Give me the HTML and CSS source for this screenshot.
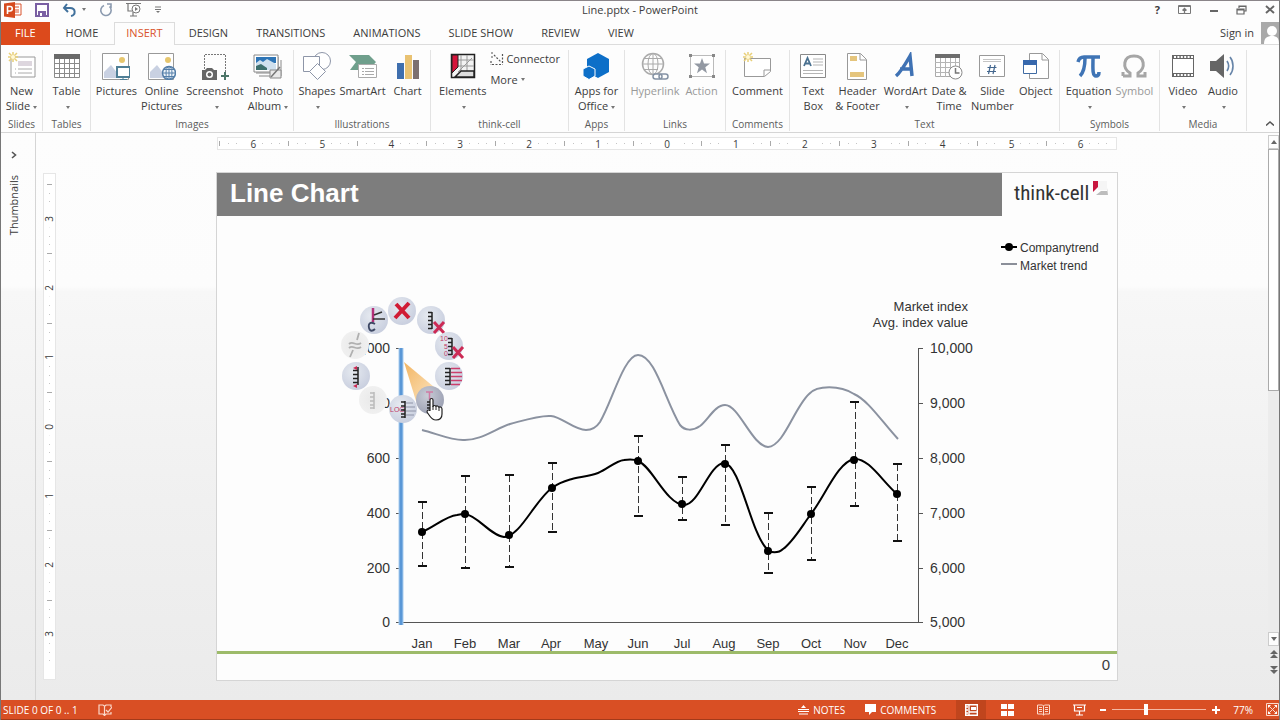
FILE: index.html
```html
<!DOCTYPE html>
<html lang="en">
<head>
  <meta charset="UTF-8">
  <title>Line.pptx - PowerPoint</title>
  <link rel="stylesheet" href="styles.css">
</head>
<body>

  <!-- Title bar -->
  <header class="title-bar">
    <div class="quick-access">
      <svg class="icon" width="18" height="16" viewBox="0 0 18 16"><path d="M10 2h7v11h-7z" fill="#fff" stroke="#d9532c"/><path d="M11 5h4M11 8h4M11 10h4" stroke="#d9532c"/><path d="M0 1.500L11 0v16L0 14.500z" fill="#d64a1e"/><path d="M3.500 12V4.500h2.500a2 2 0 0 1 0 4.500H3.500" fill="none" stroke="#fff" stroke-width="1.600"/></svg>
      <button class="tool" aria-label="Save"><svg width="14" height="14" viewBox="0 0 14 14"><path d="M1 1h12v12H1z" fill="#fff" stroke="#7a5fa3" stroke-width="2"/><path d="M3 8h8v5H3z" fill="#7a5fa3"/><path d="M5 10h2v3H5z" fill="#fff"/></svg></button>
      <button class="tool undo" aria-label="Undo"><svg width="14" height="14" viewBox="0 0 14 14"><path d="M5 1L2 5l4 4M2 5h6c6 0 6 7 1 8" fill="none" stroke="#41719c" stroke-width="2"/></svg><i class="caret"></i></button>
      <button class="tool" aria-label="Repeat"><svg width="14" height="14" viewBox="0 0 14 14"><path d="M5 2.500A5.200 5.200 0 1 0 10.500 3.500M8 1h4v4" fill="none" stroke="#8c9bb0" stroke-width="1.600"/></svg></button>
      <button class="tool" aria-label="Start from beginning"><svg width="16" height="16" viewBox="0 0 16 16"><path d="M0 1.500h15M2 2v7h4M4 14h7M7 10v4" fill="none" stroke="#777" stroke-width="1.200"/><circle cx="10" cy="7" r="4" fill="#fff" stroke="#777"/><path d="M9 5l3 2-3 2z" fill="#777"/></svg></button>
      <button class="tool" aria-label="Customize toolbar"><svg width="6" height="8" viewBox="0 0 6 8"><path d="M0 1h6M0 3.500h6" stroke="#777"/><path d="M1 5h4L3 7z" fill="#777"/></svg></button>
    </div>
    <h1 class="doc-title">Line.pptx - PowerPoint</h1>
    <div class="window-buttons">
      <button class="tool" aria-label="Help"><b>?</b></button>
      <button class="tool" aria-label="Ribbon display options"><svg width="13" height="11" viewBox="0 0 13 11"><path d="M.5 1.500h12v8H.500zM0 2.500h13" fill="none" stroke="#777"/><path d="M6.500 9V5M4.500 6.500l2-2 2 2" fill="none" stroke="#777" stroke-width="1.300"/></svg></button>
      <button class="tool" aria-label="Minimize"><svg width="9" height="9" viewBox="0 0 9 9"><path d="M1 6h8" stroke="#666" stroke-width="2"/></svg></button>
      <button class="tool" aria-label="Restore"><svg width="11" height="10" viewBox="0 0 11 10"><path d="M3 3V1h7v5H8M1 4h7v5H1zM1 5h7M3 1.500h7" fill="none" stroke="#666" stroke-width="1.200"/></svg></button>
      <button class="tool" aria-label="Close"><svg width="10" height="9" viewBox="0 0 10 9"><path d="M1 1l8 7M9 1L1 8" stroke="#666" stroke-width="2"/></svg></button>
    </div>
  </header>

  <!-- Ribbon tabs -->
  <nav class="tabs">
    <a class="tab file" href="#file">FILE</a>
    <a class="tab" href="#home">HOME</a>
    <a class="tab active" href="#insert">INSERT</a>
    <a class="tab" href="#design">DESIGN</a>
    <a class="tab" href="#transitions">TRANSITIONS</a>
    <a class="tab" href="#animations">ANIMATIONS</a>
    <a class="tab" href="#slideshow">SLIDE SHOW</a>
    <a class="tab" href="#review">REVIEW</a>
    <a class="tab" href="#view">VIEW</a>
    <a class="sign-in" href="#signin">Sign in
      <svg width="18" height="22" viewBox="0 0 18 22"><path d="M0 0h18v22H0z" fill="#a9a9a9"/><circle cx="11" cy="9" r="5" fill="#fff"/><path d="M3 22c0-6 3-8 8-8s7 2 7 8z" fill="#fff"/></svg>
    </a>
  </nav>

  <!-- Ribbon -->
  <section class="ribbon">
    <div class="group">
      <div class="commands">
        <button class="command"><svg width="28" height="28" viewBox="0 0 28 28"><path d="M3 5h24v20H3z" fill="#fff" stroke="#999"/><path d="M10 9h14v5H10z" fill="#ddd6de"/><path d="M7 17h1M10 17h14M7 21h1M10 21h14" stroke="#aaa"/><path d="M5 0v10M0 5h10M1 1l8 8M9 1L1 9" stroke="#e8cf78" stroke-width="1.500"/><circle cx="5" cy="5" r="2" fill="#fff8d8"/></svg><span>New<br>Slide<i class="caret"></i></span></button>
      </div>
      <h2>Slides</h2>
    </div>
    <div class="group">
      <div class="commands">
        <button class="command"><svg width="28" height="28" viewBox="0 0 28 28"><path d="M1 3h26v23H1z" fill="#fff"/><path d="M1 2h26v5H1z" fill="#696969"/><path d="M1.500 7v18.500h25V7M1 11.500h26M1 16.500h26M1 21.500h26M6.500 7v19M11.500 7v19M16.500 7v19M21.500 7v19" fill="none" stroke="#8a8a8a"/></svg><span>Table<br><i class="caret"></i></span></button>
      </div>
      <h2>Tables</h2>
    </div>
    <div class="group">
      <div class="commands">
        <button class="command"><svg width="28" height="28" viewBox="0 0 28 28"><path d="M.5 1.500h26v26H.500z" fill="#fff" stroke="#999"/><path d="M2 26V20l7-7 10 13z" fill="#c9d1e2"/><circle cx="20" cy="8" r="3" fill="#e6c66e"/><path d="M15 15h13v10H15z" fill="#fff" stroke="#4f7f96" stroke-width="2"/><path d="M21 25v3M18 27.500h7" stroke="#4f7f96"/></svg><span>Pictures</span></button>
        <button class="command"><svg width="28" height="28" viewBox="0 0 28 28"><path d="M.5 1.500h25v26H.500z" fill="#fff" stroke="#999"/><path d="M2 26V20l7-7 10 13z" fill="#c9d1e2"/><circle cx="20" cy="8" r="3" fill="#e6c66e"/><circle cx="21" cy="21" r="6.500" fill="#eef4fa" stroke="#557fa9" stroke-width="1.500"/><path d="M14.500 21h13M16 17.500h10M16 24.500h10M21 14.500v13" stroke="#557fa9"/><ellipse cx="21" cy="21" rx="3" ry="6.500" fill="none" stroke="#557fa9"/></svg><span>Online<br>Pictures</span></button>
        <button class="command"><svg width="28" height="28" viewBox="0 0 28 28"><path d="M3.500 17V2.500h21V20" fill="none" stroke="#777" stroke-dasharray="2 1"/><path d="M1 18h3l2-2h5l2 2h3v10H1z" fill="#666"/><circle cx="8.500" cy="22.500" r="3.500" fill="#fff"/><circle cx="8.500" cy="22.500" r="2" fill="#666"/><path d="M24 20v8M20 24h8" stroke="#4d7568" stroke-width="2"/></svg><span>Screenshot<br><i class="caret"></i></span></button>
        <button class="command"><svg width="30" height="28" viewBox="0 0 30 28"><path d="M6 24h22V8" fill="none" stroke="#888"/><path d="M3 21h22V5" fill="none" stroke="#888"/><path d="M1 3h24v17H1z" fill="#fff" stroke="#888"/><path d="M3 5h20v6H3z" fill="#2e75b6"/><path d="M3 11l4-3 3 2 4-3 9 5v6H3z" fill="#cfe0ee"/><path d="M3 14l5-2 6 4v2H3z" fill="#3d6f6d"/><path d="M17 18h11v8H17z" fill="#e9e9e9" stroke="#888"/><path d="M18 25l9-10" stroke="#777" stroke-width="1.500"/></svg><span>Photo<br>Album<i class="caret"></i></span></button>
      </div>
      <h2>Images</h2>
    </div>
    <div class="group">
      <div class="commands">
        <button class="command"><svg width="28" height="28" viewBox="0 0 28 28"><circle cx="19" cy="9" r="8.500" fill="#fff" stroke="#8e96a8"/><path d="M.5 4.500h16v15H.500z" fill="#fff" stroke="#8e96a8"/><path d="M14.500 11.500l8 8-8 8-8-8z" fill="#fff" stroke="#8e96a8"/></svg><span>Shapes<br><i class="caret"></i></span></button>
        <button class="command"><svg width="28" height="28" viewBox="0 0 28 28"><path d="M0 3h20l7 7-7 8H1l6-8z" fill="#6f9f8c"/><path d="M9.500 12.500h18v13h-18z" fill="#fff" stroke="#aaa"/><path d="M13 16.500h2M16 16.500h9M13 19.500h2M16 19.500h9M13 22.500h2M16 22.500h9" stroke="#aaa"/></svg><span>SmartArt</span></button>
        <button class="command"><svg width="24" height="28" viewBox="0 0 24 28"><path d="M1 11h7v16H1z" fill="#3f6fae"/><path d="M9 3h7v24H9z" fill="#e9c272"/><path d="M17 8h6v19h-6z" fill="#7d7070"/></svg><span>Chart</span></button>
      </div>
      <h2>Illustrations</h2>
    </div>
    <div class="group">
      <div class="commands">
        <button class="command"><svg width="26" height="28" viewBox="0 0 26 28"><path d="M1.500 2.500h23v23h-23z" fill="#f3f3f3" stroke="#222" stroke-width="1.500"/><path d="M6 8h18M6 14h18M11 3v16M17 3v16M8 20L22 6" stroke="#999"/><path d="M2 3h6v12l-6 6z" fill="#d5143b" stroke="#222"/><path d="M5 25l6-6h13v6z" fill="#ddd" stroke="#222" stroke-width="1.500"/></svg><span>Elements<br><i class="caret"></i></span></button>
        <div class="small-commands">
          <button class="small"><svg width="14" height="14" viewBox="0 0 14 14"><path d="M1 1h2M1 5h2M4 3l7 7M12.500 2v9M2 12.500h11M1 9v4" stroke="#555" stroke-width="1.200" stroke-dasharray="2 1.500" fill="none"/></svg>Connector</button>
          <button class="small">More<i class="caret"></i></button>
        </div>
      </div>
      <h2>think-cell</h2>
    </div>
    <div class="group">
      <div class="commands">
        <button class="command"><svg width="28" height="28" viewBox="0 0 28 28"><path d="M15 1l11 6v13l-11 6-11-6V7z" fill="#0d6fc8"/><path d="M6 14l6 3v7l-6 3.500L0 24v-7z" fill="#0d6fc8" stroke="#fff"/></svg><span>Apps for<br>Office<i class="caret"></i></span></button>
      </div>
      <h2>Apps</h2>
    </div>
    <div class="group">
      <div class="commands">
        <button class="command" disabled><svg width="28" height="28" viewBox="0 0 28 28"><circle cx="12" cy="12" r="10.500" fill="none" stroke="#aaa" stroke-width="1.500"/><ellipse cx="12" cy="12" rx="5" ry="10.500" fill="none" stroke="#aaa"/><path d="M1 12h22M3 6.500h18M3 17.500h14M12 1v22" stroke="#aaa"/><rect x="12" y="22" width="9" height="5" rx="2.500" fill="#fff" stroke="#8593a5" stroke-width="1.500"/><rect x="18" y="22" width="9" height="5" rx="2.500" fill="none" stroke="#8593a5" stroke-width="1.500"/></svg><span>Hyperlink</span></button>
        <button class="command" disabled><svg width="28" height="28" viewBox="0 0 28 28"><path d="M2.500 3.500h23v21h-23z" fill="#fff" stroke="#bbb"/><path d="M1 2h3v3H1zM24 2h3v3h-3zM1 23h3v3H1zM24 23h3v3h-3z" fill="#888"/><path d="M14 6l2 5.500h6l-4.700 3.700 1.700 6-5-3.600-5 3.600 1.700-6L6 11.500h6z" fill="#9399a3"/></svg><span>Action</span></button>
      </div>
      <h2>Links</h2>
    </div>
    <div class="group">
      <div class="commands">
        <button class="command"><svg width="28" height="28" viewBox="0 0 28 28"><path d="M1.500 6.500h26v13l-6 5h-20z" fill="#fff" stroke="#999"/><path d="M27 18h-6v6" fill="none" stroke="#999"/><path d="M5 0v10M0 5h10M1 1l8 8M9 1L1 9" stroke="#e8cf78" stroke-width="1.500"/><circle cx="5" cy="5" r="2" fill="#fff8d8"/></svg><span>Comment</span></button>
      </div>
      <h2>Comments</h2>
    </div>
    <div class="group">
      <div class="commands">
        <button class="command"><svg width="28" height="28" viewBox="0 0 28 28"><path d="M1.500 2.500h25v23h-25z" fill="#fff" stroke="#8a8a8a"/><path d="M14 7h10M14 10h10M14 13h10M4 18.500h20M4 21.500h20" stroke="#b5b5b5"/><path d="M5 14L8.500 6 12 14M6 11.500h5" fill="none" stroke="#4a7190" stroke-width="1.800"/></svg><span>Text<br>Box</span></button>
        <button class="command"><svg width="22" height="28" viewBox="0 0 22 28"><path d="M1.500 1.500h13l6 6v20h-19z" fill="#fff" stroke="#999"/><path d="M14 2v6h6" fill="none" stroke="#999"/><path d="M4 4h7v5H4zM4 20h14v5H4z" fill="#e5c57d"/></svg><span>Header<br>&amp; Footer</span></button>
        <button class="command"><svg width="22" height="28" viewBox="0 0 22 28"><path d="M2 24C7 20 12 11 16 4L18 24M6 17h12" fill="none" stroke="#3f72b4" stroke-width="3.500"/></svg><span>WordArt<br><i class="caret"></i></span></button>
        <button class="command"><svg width="28" height="28" viewBox="0 0 28 28"><path d="M.5 4.500h24v20H.500z" fill="#fff" stroke="#aaa"/><path d="M0 2h25v4H0z" fill="#6d6d6d"/><path d="M0 10.500h25M0 15.500h25M0 20.500h25M5.500 6v19M10.500 6v19M15.500 6v19M20.500 6v19" stroke="#b5b5b5"/><circle cx="20.500" cy="20.500" r="6.500" fill="#fff" stroke="#8a8a8a"/><path d="M20.500 16v5h4" fill="none" stroke="#777" stroke-width="1.500"/></svg><span>Date &amp;<br>Time</span></button>
        <button class="command"><svg width="28" height="28" viewBox="0 0 28 28"><path d="M1.500 3.500h25v21h-25z" fill="#fff" stroke="#999"/><path d="M5 7.500h18M5 9.500h18" stroke="#c5c5c5"/><path d="M12.500 13l-2 9M17 13l-2 9M9.500 15.500h9M9 19.500h9" stroke="#44678e" stroke-width="1.200"/></svg><span>Slide<br>Number</span></button>
        <button class="command"><svg width="28" height="28" viewBox="0 0 28 28"><path d="M7.500 1.500h13l6 6v19h-19z" fill="#fff" stroke="#999"/><path d="M20 2v6h6" fill="none" stroke="#999"/><path d="M1.500 10.500h13v11h-13z" fill="#fff" stroke="#3f6ba3"/><path d="M1 8h14v5H1z" fill="#3768ad"/></svg><span>Object</span></button>
      </div>
      <h2>Text</h2>
    </div>
    <div class="group">
      <div class="commands">
        <button class="command"><svg width="26" height="28" viewBox="0 0 26 28"><path d="M2 10C3 6 5 5 8 5h16M9 6C9 14 8 20 4 24M17 6c0 9-1 18 3 18 2 0 3-1 3-4" fill="none" stroke="#3f74b5" stroke-width="3.500"/></svg><span>Equation<br><i class="caret"></i></span></button>
        <button class="command" disabled><svg width="26" height="28" viewBox="0 0 26 28"><path d="M2 24h7v-3C1 16 2 4 13 4s12 12 4 17v3h7v-4M2 24v-4" fill="none" stroke="#a6a6a6" stroke-width="3"/></svg><span>Symbol</span></button>
      </div>
      <h2>Symbols</h2>
    </div>
    <div class="group">
      <div class="commands">
        <button class="command"><svg width="24" height="28" viewBox="0 0 24 28"><path d="M1 3h22v22H1z" fill="#666"/><path d="M2 7h20v14H2z" fill="#fff"/><path d="M3 5h19M3 23h19" stroke="#fff" stroke-width="2" stroke-dasharray="2 1.400"/></svg><span>Video<br><i class="caret"></i></span></button>
        <button class="command"><svg width="26" height="28" viewBox="0 0 26 28"><path d="M0 9h6l8-7v24l-8-7H0z" fill="#666"/><path d="M17 9c2 3 2 7 0 10M20 5c4 5 4 13 0 18" fill="none" stroke="#6684a8" stroke-width="1.600"/></svg><span>Audio<br><i class="caret"></i></span></button>
      </div>
      <h2>Media</h2>
    </div>
    <button class="collapse" aria-label="Collapse ribbon"><svg width="8" height="5" viewBox="0 0 8 5"><path d="M0 4.500l4-3.500 4 3.500" fill="none" stroke="#555" stroke-width="1.500"/></svg></button>
  </section>

  <main class="workspace">
    <aside class="rail">
      <button class="tool" aria-label="Expand thumbnails"><svg width="6" height="8" viewBox="0 0 6 8"><path d="M1 1l3.500 3L1 7" fill="none" stroke="#555" stroke-width="1.600"/></svg></button>
      <span class="rail-label">Thumbnails</span>
    </aside>

    <div class="stage">
      <div class="ruler horizontal">
        <span><b>6</b></span><span><b>5</b></span><span><b>4</b></span><span><b>3</b></span><span><b>2</b></span><span><b>1</b></span><span><b>0</b></span><span><b>1</b></span><span><b>2</b></span><span><b>3</b></span><span><b>4</b></span><span><b>5</b></span><span><b>6</b></span>
      </div>
      <div class="ruler vertical">
        <span><b>3</b></span><span><b>2</b></span><span><b>1</b></span><span><b>0</b></span><span><b>1</b></span><span><b>2</b></span><span><b>3</b></span>
      </div>

      <article class="slide">
        <div class="slide-head">
          <h2 class="slide-title">Line Chart</h2>
          <div class="brand">think-cell<svg width="15" height="15" viewBox="0 0 15 15"><path d="M0 0h5v6L0 11z" fill="#c8173f"/><path d="M5 0h9v9H5z" fill="#f5f5f5"/><path d="M3 14l5-4h6V7l1 7z" fill="#bdbdbd"/></svg></div>
        </div>

        <svg class="chart" viewBox="217 216 900 435">
          <!-- legend -->
          <g class="legend">
            <path d="M1001 247h16" stroke="#000" stroke-width="2"/>
            <circle cx="1009" cy="247" r="4"/>
            <text x="1020" y="252">Companytrend</text>
            <path d="M1001 264h16" stroke="#8b8f99" stroke-width="2"/>
            <text x="1020" y="270">Market trend</text>
          </g>
          <g class="label end">
            <text x="968" y="311">Market index</text>
            <text x="968" y="327">Avg. index value</text>
          </g>

          <!-- axes -->
          <path class="axis" d="M396 622.500H923M918.500 348V623M918 348.500h5M918 403.500h5M918 458.500h5M918 513.500h5M918 568.500h5M396 348.500h5M396 403.500h5M396 458.500h5M396 513.500h5M396 568.500h5"/>
          <path d="M401 348V625" stroke="#a9cdf0" stroke-width="5"/>
          <path d="M401 348V625" stroke="#5a97d6" stroke-width="3"/>
          <g class="value end">
            <text x="390" y="353">1,000</text>
            <text x="390" y="408">800</text>
            <text x="390" y="463">600</text>
            <text x="390" y="518">400</text>
            <text x="390" y="573">200</text>
            <text x="390" y="627">0</text>
          </g>
          <g class="value">
            <text x="930" y="353">10,000</text>
            <text x="930" y="408">9,000</text>
            <text x="930" y="463">8,000</text>
            <text x="930" y="518">7,000</text>
            <text x="930" y="573">6,000</text>
            <text x="930" y="627">5,000</text>
          </g>
          <g class="label middle">
            <text x="422" y="648">Jan</text>
            <text x="465" y="648">Feb</text>
            <text x="509" y="648">Mar</text>
            <text x="551" y="648">Apr</text>
            <text x="596" y="648">May</text>
            <text x="638" y="648">Jun</text>
            <text x="682" y="648">Jul</text>
            <text x="724" y="648">Aug</text>
            <text x="768" y="648">Sep</text>
            <text x="811" y="648">Oct</text>
            <text x="855" y="648">Nov</text>
            <text x="897" y="648">Dec</text>
          </g>

          <!-- high / low ranges -->
          <path class="range" d="M422.500 502V566M465.500 476V568M509.500 475V567M552.500 463V532M638.500 436V516M682.500 477V520M725.500 445V525M768.500 513V573M811.500 487V560M855.500 402V506M897.500 464V541"/>
          <path class="cap" d="M418 502h9M418 566h9M461 476h9M461 568h9M505 475h9M505 567h9M548 463h9M548 532h9M634 436h9M634 516h9M678 477h9M678 520h9M721 445h9M721 525h9M764 513h9M764 573h9M807 487h9M807 560h9M850 402h9M850 506h9M893 464h9M893 541h9"/>

          <path class="market" d="M422 430C435 433 450 440 463 440C480 441 495 429 510 424C525 420 540 415 551 416C562 417 574 430 586 430C592 430 596 428 600 422C612 402 624 355 638 355C655 355 665 400 680 425C685 431 693 431 700 426C708 420 715 405 725 405C739 405 752 446 768 447C784 446 794 408 809 394C817 385 840 385 854 394C868 400 883 423 898 439"/>
          <path class="company" d="M422 532C434 527 446 516 457 515C461 514 463 514 465 514C477 515 491 536 504 537C520 537 535 500 552 488C560 482 565 481 572 479C580 477 590 476 598 473C608 469 615 461 624 460C630 459 634 459 638 461C652 466 666 504 684 505C699 505 709 464 724 463C740 464 750 530 766 548C770 554 779 553 783 549C793 542 802 526 811 514C825 496 838 462 854 459C868 457 883 482 897 494"/>
          <g class="points">
            <circle cx="422" cy="532" r="4"/><circle cx="465" cy="514" r="4"/><circle cx="509" cy="535" r="4"/><circle cx="552" cy="488" r="4"/><circle cx="638" cy="461" r="4"/><circle cx="682" cy="504" r="4"/><circle cx="725" cy="464" r="4"/><circle cx="768" cy="551" r="4"/><circle cx="811" cy="514" r="4"/><circle cx="854" cy="460" r="4"/><circle cx="897" cy="494" r="4"/>
          </g>
        </svg>

        <footer class="slide-foot">0</footer>

        <!-- axis context menu -->
        <div class="radial">
          <svg class="beam" width="36" height="42" viewBox="0 0 36 42"><defs><linearGradient id="beam" x1="0" y1="0" x2="1" y2="1"><stop offset="0" stop-color="#f3b562"/><stop offset="1" stop-color="#fbe3bd"/></linearGradient></defs><path d="M1 1l30 25-18 14z" fill="url(#beam)"/></svg>
          <button class="bubble b1" aria-label="Delete axis"><svg viewBox="0 0 28 28"><path d="M8 7l13 14M21 6L7 21" stroke="#d01c35" stroke-width="4"/></svg></button>
          <button class="bubble b2" aria-label="Delete tick marks"><svg viewBox="0 0 28 28"><path d="M15 6v17M11 6.500h4M11 10.500h4M11 14.500h4M11 18.500h4M11 22.500h4" stroke="#222" stroke-width="1.500"/><path d="M17 16l10 11M27 16L17 27" stroke="#cc2a55" stroke-width="3"/></svg></button>
          <button class="bubble b3" aria-label="Delete labels"><svg viewBox="0 0 28 28"><text x="5" y="9">10</text><text x="9" y="17">5</text><text x="9" y="24">0</text><path d="M17 6v17M13 6.500h4M13 10.500h4M13 14.500h4M13 18.500h4M13 22.500h4" stroke="#222" stroke-width="1.500"/><path d="M18 15l10 11M28 15L18 26" stroke="#cc2a55" stroke-width="3"/></svg></button>
          <button class="bubble b4" aria-label="Add gridlines"><svg viewBox="0 0 28 28"><path d="M16 6.500h9M16 10.500h11M16 14.500h11M16 18.500h11M16 22.500h9" stroke="#cc3f6c" stroke-width="1.500"/><path d="M15 6v17M10 6.500h5M10 10.500h5M10 14.500h5M10 18.500h5M10 22.500h5" stroke="#222" stroke-width="1.500"/></svg></button>
          <button class="bubble b5 hover" aria-label="Add axis title"><svg viewBox="0 0 28 28"><path d="M10 6h7M13.500 6v7h3" fill="none" stroke="#cf7ba4" stroke-width="1.500"/><path d="M15 14v11M11 16h4M11 19h4M11 22h4M11 25h4" stroke="#222" stroke-width="1.500"/></svg></button>
          <button class="bubble b6" aria-label="Logarithmic scale"><svg viewBox="0 0 28 28"><text x="1" y="17">LOG</text><path d="M16 6v17M12 7h4M12 11h4M12 15h4M12 19h4M12 22h4" stroke="#222" stroke-width="1.500"/><path d="M17 8h7M17 12h9M17 16h10M17 20h8" stroke="#8f94a8"/></svg></button>
          <button class="bubble b7 faded" aria-label="Same scale"><svg viewBox="0 0 28 28"><path d="M15 6v17M11 7h4M11 11h4M11 15h4M11 19h4M11 22h4" stroke="#bbb" stroke-width="1.500"/></svg></button>
          <button class="bubble b8" aria-label="Set scale range"><svg viewBox="0 0 28 28"><path d="M16 5v18M11 8.500h5M11 12.500h5M11 16.500h5M11 20.500h5" stroke="#222" stroke-width="1.500"/><path d="M11 6l4-2v4zM11 24l4-2v4z" fill="#cc2a55"/></svg></button>
          <button class="bubble b9 faded" aria-label="Add break"><svg viewBox="0 0 28 28"><path d="M8 13c4-4 7 3 12-1M8 17c4-4 7 3 12-1M16 9l2-7M9 26l3-7" fill="none" stroke="#b0b0b0" stroke-width="1.800"/></svg></button>
          <button class="bubble b10" aria-label="Change axis"><svg viewBox="0 0 28 28"><path d="M13 2v14" stroke="#b42f78" stroke-width="2.500"/><path d="M13 13h12M14 9l8-3" stroke="#333" stroke-width="1.500"/><path d="M15 18c-5-3-7 0-6 4s4 3 6 1" fill="none" stroke="#3e4864" stroke-width="1.800"/></svg></button>
          <svg class="hand" width="18" height="24" viewBox="0 0 18 24"><path d="M5 13V3c0-2 3-2 3 0v7c0-2 3-2 3 0 0-2 3-1 3 1 0-2 3-1 3 1v5c0 4-2 6-6 6-5 0-6-4-9-8 0-3 3-2 3-1z" fill="#fff" stroke="#222" stroke-width="1.200"/><path d="M8 9v4M11 10v3M14 11v3" stroke="#222"/></svg>
        </div>
      </article>
    </div>

    <div class="scroll">
      <button class="scroll-button" aria-label="Scroll up"><svg width="6" height="4" viewBox="0 0 6 4"><path d="M0 4l3-4 3 4z" fill="#666"/></svg></button>
      <div class="thumb"></div>
      <div class="track"></div>
      <button class="scroll-button" aria-label="Scroll down"><svg width="6" height="4" viewBox="0 0 6 4"><path d="M0 0l3 4 3-4z" fill="#666"/></svg></button>
      <button class="scroll-page" aria-label="Previous slide"><svg width="8" height="8" viewBox="0 0 8 8"><path d="M0 4l4-4 4 4zM0 8l4-4 4 4z" fill="#666"/></svg></button>
      <button class="scroll-page" aria-label="Next slide"><svg width="8" height="8" viewBox="0 0 8 8"><path d="M0 0l4 4 4-4zM0 4l4 4 4-4z" fill="#666"/></svg></button>
    </div>
  </main>

  <!-- Status bar -->
  <footer class="status-bar">
    <span>SLIDE 0 OF 0 .. 1</span>
    <button class="tool proof" aria-label="Spelling"><svg width="14" height="12" viewBox="0 0 14 12"><path d="M6.500 10.500V2L5 1H1v9h4l1.500 1.500L8 10h5V8M7 2l1-1h5v2M8 6l2 2 4-5" fill="none" stroke="#fbd9cb" stroke-width="1.200"/></svg></button>
    <div class="status-right">
      <button class="status-item"><svg width="11" height="11" viewBox="0 0 11 11"><path d="M0 5.500h11M0 7.500h11M1 10h9" stroke="#fff"/><path d="M3 4l2.500-3L8 4z" fill="#fff"/></svg>NOTES</button>
      <button class="status-item comments"><svg width="11" height="11" viewBox="0 0 11 11"><path d="M0 0h11v8H7l-3 3V8H0z" fill="#fff"/></svg>COMMENTS</button>
      <button class="view current" aria-label="Normal view"><svg width="13" height="12" viewBox="0 0 13 12"><path d="M.700.700h11.600v10.600H.700zM4 1v10M4 8h8M1 3h2M1 6h2M1 9h2" fill="none" stroke="#fff" stroke-width="1.400"/><path d="M6 3h5v3H6z" fill="#fff"/></svg></button>
      <button class="view" aria-label="Slide sorter"><svg width="13" height="12" viewBox="0 0 13 12"><path d="M0 0h6v5H0zM7 0h6v5H7zM0 7h6v5H0zM7 7h6v5H7z" fill="#fff"/></svg></button>
      <button class="view" aria-label="Reading view"><svg width="13" height="12" viewBox="0 0 13 12"><path d="M6.500 2v9.500M.500 1h5l1 1 1-1h5v9h-5l-1 1-1-1h-5zM2 3.500h3M2 5.500h3M2 7.500h3M8 3.500h3M8 5.500h3M8 7.500h3" fill="none" stroke="#fbd9cb"/></svg></button>
      <button class="view" aria-label="Slide show"><svg width="13" height="12" viewBox="0 0 13 12"><path d="M0 1h13M1.500 1v6h10V1M4 3.500h5M6.500 7v4M3 11h7" fill="none" stroke="#fff" stroke-width="1.200"/></svg></button>
      <button class="tool" aria-label="Zoom out"><svg width="6" height="8" viewBox="0 0 6 8"><path d="M0 4h6" stroke="#fff" stroke-width="2"/></svg></button>
      <input class="zoom" type="range" min="10" max="200" value="77" aria-label="Zoom">
      <button class="tool" aria-label="Zoom in"><svg width="8" height="8" viewBox="0 0 8 8"><path d="M0 4h8M4 0v8" stroke="#fff" stroke-width="2"/></svg></button>
      <span class="percent">77%</span>
      <button class="tool" aria-label="Fit slide to window"><svg width="13" height="13" viewBox="0 0 13 13"><path d="M.500.500h12v12H.500z" fill="none" stroke="#fbd9cb"/><path d="M2 2h3L2 5zM11 2H8l3 3zM2 11h3L2 8zM11 11H8l3-3z" fill="#fff"/><path d="M3 3l7 7M10 3l-7 7" stroke="#fbd9cb"/></svg></button>
    </div>
  </footer>

</body>
</html>
```
FILE: styles.css
```css
* {
  box-sizing: border-box;
}
body {
  margin: 0;
  height: 100vh;
  display: flex;
  flex-direction: column;
  overflow: hidden;
  background: #fdfdfd;
  border-top: 1px solid #8a8589;
  border-left: 1px solid #777;
  border-right: 1px solid #777;
  font-family: "Open Sans", "Noto Sans", sans-serif;
  font-size: 11px;
  color: #3c3c3c;
}
button {
  margin: 0;
  padding: 0;
  border: 0;
  background: none;
  font: inherit;
  color: inherit;
}
h1, h2 {
  margin: 0;
  font-weight: normal;
}
a {
  color: inherit;
  text-decoration: none;
}
svg {
  display: block;
}
.tool {
  display: flex;
  align-items: center;
}
.caret {
  display: inline-block;
  margin-left: 3px;
  border: 2px solid transparent;
  border-top: 3px solid #777;
  border-bottom: 0;
  vertical-align: middle;
}

/* Title bar */
.title-bar {
  display: grid;
  grid-template-columns: 1fr auto 1fr;
  align-items: center;
  height: 21px;
  padding-bottom: 4px;
}
.quick-access {
  display: flex;
  align-items: center;
  gap: 13px;
  padding-left: 3px;
}
.undo {
  gap: 3px;
}
.doc-title {
  font-size: 11px;
}
.window-buttons {
  display: flex;
  align-items: center;
  justify-content: flex-end;
  gap: 18px;
  padding-right: 4px;
}

/* Tabs */
.tabs {
  display: flex;
  height: 23px;
  border-bottom: 1px solid #dcdcdc;
}
.tab {
  height: 23px;
  padding: 0 14px;
  line-height: 22px;
}
.tab.file {
  margin-right: 2px;
  background: #dc4a1c;
  color: #fff;
}
.tab.active {
  margin-left: 2px;
  border: 1px solid #dcdcdc;
  border-bottom: 0;
  background: #fdfdfd;
  color: #d9532c;
  padding: 0 11px;
  line-height: 20px;
}
.sign-in {
  display: flex;
  gap: 7px;
  margin-left: auto;
  line-height: 21px;
}

/* Ribbon */
.ribbon {
  display: grid;
  grid-template-columns: 42fr 48fr 203fr 137fr 138fr 56fr 101fr 64fr 270fr 100fr 87fr 32fr;
  height: 88px;
  padding: 5px 0 1px;
  border-bottom: 1px solid #d5d5d5;
}
.group {
  display: flex;
  flex-direction: column;
  align-items: center;
  justify-content: space-between;
  border-right: 1px solid #e3e3e3;
}
.group h2 {
  font-size: 10px;
  line-height: 14px;
  color: #5c5c5c;
}
.commands {
  display: flex;
  gap: 4px;
  line-height: 15px;
}
.command {
  display: flex;
  flex-direction: column;
  align-items: center;
  min-width: 36px;
  gap: 3px;
  padding-top: 2px;
  line-height: 15px;
  white-space: nowrap;
}
.command:disabled {
  color: #999;
}
.command .caret:only-child {
  margin-left: 0;
}
.small-commands {
  display: flex;
  flex-direction: column;
  align-items: flex-start;
  gap: 4px;
}
.small {
  display: flex;
  align-items: center;
  gap: 2px;
  height: 17px;
}
.small .caret {
  margin-left: 1px;
}
.collapse {
  align-self: end;
  justify-self: end;
  padding: 5px;
}

/* Workspace */
.workspace {
  flex: 1;
  min-height: 0;
  display: grid;
  grid-template-columns: 35px 1fr 11px;
  background: linear-gradient(#fdfdfd 0, #fcfcfc 27%, #f7f7f7 28%, #f0f0f0 65%, #ebebeb 100%);
}
.rail {
  display: flex;
  flex-direction: column;
  align-items: center;
  gap: 16px;
  padding: 18px 9px 0 0;
  border-right: 1px solid #d5d5d5;
}
.rail-label {
  writing-mode: vertical-rl;
  transform: rotate(180deg);
}
.stage {
  display: grid;
  grid-template-columns: 23px minmax(10px, 1fr) minmax(0, 900px) minmax(10px, 1fr);
  grid-template-rows: 13px auto;
  align-content: start;
  row-gap: 23px;
  padding: 4px 0 0 7px;
}
.ruler {
  display: flex;
  background: #fff;
  border: 1px solid #e6e6e6;
  font-size: 10px;
}
.ruler span {
  flex: 1;
  display: flex;
  align-items: center;
  justify-content: center;
}
.ruler b {
  font-weight: normal;
  background: #fff;
}
.horizontal {
  grid-column: 3;
  padding: 0 1px;
}
.horizontal span {
  background:
    linear-gradient(#aaa, #aaa) left center / 1px 5px no-repeat,
    repeating-linear-gradient(90deg, #c5c5c5 0 1px, transparent 1px 12.5%) center / 100% 1px no-repeat;
}
.horizontal b {
  padding: 0 6px;
  line-height: 10px;
}
.vertical {
  grid-column: 1;
  grid-row: 2;
  width: 13px;
  flex-direction: column;
  padding: 10px 0;
}
.vertical span {
  background:
    linear-gradient(#aaa, #aaa) center top / 5px 1px no-repeat,
    repeating-linear-gradient(#c5c5c5 0 1px, transparent 1px 12.5%) center / 1px 100% no-repeat;
}
.vertical b {
  writing-mode: vertical-rl;
  transform: rotate(180deg);
  padding: 6px 0;
  line-height: 11px;
}

/* Slide */
.slide {
  grid-column: 3;
  grid-row: 2;
  position: relative;
  background: #fdfdfd;
  outline: 1px solid #d5d5d5;
  font-family: "Liberation Sans", Arial, sans-serif;
}
.slide-head {
  display: flex;
  height: 43px;
}
.slide-title {
  flex: 1;
  padding-left: 13px;
  background: #7d7d7d;
  color: #fff;
  font-size: 26px;
  font-weight: bold;
  line-height: 41px;
}
.brand {
  display: flex;
  gap: 4px;
  width: 115px;
  padding: 8px 0 0 12px;
  font-family: "Liberation Sans Narrow", "Roboto Condensed", "Liberation Sans", sans-serif;
  font-size: 21px;
  line-height: 24px;
  color: #333;
}
.chart {
  width: 100%;
}
.chart text {
  fill: #333;
}
.legend {
  font-size: 12px;
}
.label {
  font-size: 13px;
}
.value {
  font-size: 14px;
}
.end {
  text-anchor: end;
}
.middle {
  text-anchor: middle;
}
.axis {
  fill: none;
  stroke: #555;
}
.range {
  stroke: #333;
  stroke-dasharray: 7 3;
}
.cap {
  stroke: #111;
  stroke-width: 2;
}
.market {
  fill: none;
  stroke: #8b92a0;
  stroke-width: 2;
}
.company {
  fill: none;
  stroke: #000;
  stroke-width: 2;
}
.slide-foot {
  height: 29px;
  padding-right: 7px;
  border-top: 3px solid #9dbb6a;
  font-size: 15px;
  line-height: 22px;
  text-align: right;
}

/* Radial axis menu, floats over the chart */
.radial {
  position: absolute;
  left: 124px;
  top: 124px;
  width: 122px;
  height: 126px;
}
.bubble {
  position: absolute;
  width: 28px;
  height: 28px;
  border-radius: 50%;
  background: radial-gradient(circle at 40% 35%, #e6eaf0, #c9cfdf 75%);
}
.bubble svg {
  overflow: visible;
}
.bubble text {
  font-size: 7px;
  fill: #c03a68;
}
.bubble.faded {
  background: radial-gradient(#e9e9e9, #f3f3f3);
}
.bubble.hover {
  background: radial-gradient(circle at 40% 35%, #c9ccd6, #9a9fb2 80%);
}
.b1 { left: 47px; top: 0; }
.b2 { left: 76px; top: 9px; }
.b3 { left: 94px; top: 35px; }
.b4 { left: 94px; top: 65px; }
.b5 { left: 75px; top: 89px; }
.b6 { left: 48px; top: 98px; }
.b7 { left: 18px; top: 89px; }
.b8 { left: 1px; top: 65px; }
.b9 { left: 0; top: 34px; }
.b10 { left: 19px; top: 9px; }
.beam {
  position: absolute;
  left: 62px;
  top: 64px;
}
.hand {
  position: absolute;
  left: 84px;
  top: 100px;
}

/* Scroll bar */
.scroll {
  display: flex;
  flex-direction: column;
  align-items: stretch;
  padding-top: 2px;
}
.scroll-button {
  display: flex;
  align-items: center;
  justify-content: center;
  height: 14px;
  border: 1px solid #ccc;
  background: #fdfdfd;
}
.thumb {
  flex: 240;
  border: 1px solid #aaa;
  background: #fff;
}
.track {
  flex: 242;
  background: #ececec;
}
.scroll-page {
  display: flex;
  align-items: center;
  justify-content: center;
  height: 16px;
}
.scroll-page:last-child {
  margin-bottom: 22px;
}

/* Status bar */
.status-bar {
  display: flex;
  align-items: center;
  height: 20px;
  padding-left: 2px;
  background: #d94f24;
  border-bottom: 1px solid #a33a1a;
  color: #fff;
  font-size: 10px;
}
.proof {
  margin-left: 20px;
}
.status-right {
  display: flex;
  align-items: center;
  gap: 6px;
  height: 100%;
  margin-left: auto;
}
.status-item {
  display: flex;
  align-items: center;
  gap: 4px;
}
.comments {
  margin: 0 14px;
}
.view {
  display: flex;
  align-items: center;
  justify-content: center;
  width: 30px;
  height: 100%;
}
.view.current {
  background: #c0451d;
}
.zoom {
  appearance: none;
  width: 94px;
  height: 12px;
  margin: 0;
  background: linear-gradient(#f3b9a4, #f3b9a4) center / 100% 1px no-repeat;
}
.zoom::-webkit-slider-thumb {
  appearance: none;
  width: 4px;
  height: 11px;
  background: #fff;
}
.percent {
  margin: 0 7px;
}
```
